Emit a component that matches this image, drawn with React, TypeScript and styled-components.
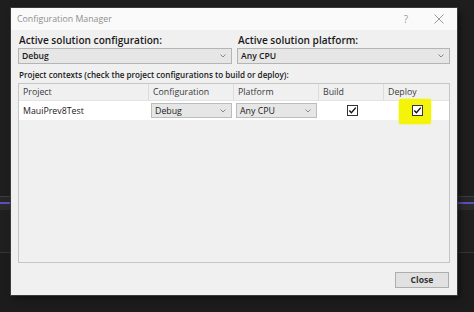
import React from 'react';
import styled, { createGlobalStyle } from 'styled-components';

const Global = createGlobalStyle`
  html, body { margin: 0; padding: 0; }
  body {
    width: 474px;
    height: 312px;
    overflow: hidden;
    background: #1f1f1f;
    font-family: "Open Sans", "Noto Sans", "Liberation Sans", sans-serif;
  }
`;

const Desktop = styled.div`
  position: relative;
  width: 474px;
  height: 312px;
  display: flex;
  flex-direction: column;
  background: #1e1e1e;
`;

const Strip = styled.div<{ $h: number; $bg: string }>`
  height: ${(p) => p.$h}px;
  background: ${(p) => p.$bg};
  flex-shrink: 0;
`;

const Dialog = styled.div`
  position: absolute;
  left: 11px;
  top: 8px;
  width: 446px;
  height: 287px;
  background: #f0f0f0;
  box-shadow: 0 0 0 1px #3a3a3a, 3px 3px 6px rgba(0, 0, 0, 0.5);
  display: flex;
  flex-direction: column;
  color: #1e1e1e;
`;

const TitleBar = styled.div`
  height: 22px;
  background: #fafafa;
  display: flex;
  align-items: center;
  padding-left: 6px;
  font-size: 8.8px;
  color: #8f8f8f;
`;

const TitleText = styled.span`
  flex: 1;
`;

const TitleButton = styled.div<{ $w: number }>`
  width: ${(p) => p.$w}px;
  height: 22px;
  display: flex;
  align-items: center;
  justify-content: center;
  color: #9a9a9a;
  font-size: 10px;
`;

const Body = styled.div`
  flex: 1;
  display: flex;
  flex-direction: column;
  padding: 4px 7px 9px 7px;
`;

const TopRow = styled.div`
  display: grid;
  grid-template-columns: 214px 1fr;
  column-gap: 5px;
`;

const Field = styled.div`
  display: flex;
  flex-direction: column;
`;

const Label = styled.div`
  font-size: 10.1px;
  height: 13px;
  line-height: 13px;
  padding-left: 1px;
  margin-bottom: 1px;
  font-weight: 600;
  color: #1a1a1a;
`;

const Combo = styled.div<{ $h: number }>`
  height: ${(p) => p.$h}px;
  box-sizing: border-box;
  border: 1px solid #b4b4b4;
  background: #e6e6e6;
  display: flex;
  align-items: center;
  padding-left: 3px;
  padding-right: 5px;
  font-size: 8.6px;
  font-weight: 600;
  color: #1a1a1a;
`;

const ComboText = styled.span`
  flex: 1;
  white-space: nowrap;
`;

const Contexts = styled(Label)`
  font-size: 8.1px;
  margin-top: 4px;
  margin-bottom: 2px;
`;

const Grid = styled.div`
  height: 180px;
  box-sizing: border-box;
  border: 1px solid #c6c6c6;
  background: #f0f0f0;
  display: flex;
  flex-direction: column;
`;

const Row = styled.div<{ $h: number; $bg: string }>`
  display: grid;
  grid-template-columns: 130px 85px 85px 65px 1fr;
  height: ${(p) => p.$h}px;
  background: ${(p) => p.$bg};
`;

const HeadCell = styled.div<{ $last?: boolean }>`
  border-right: ${(p) => (p.$last ? 'none' : '1px solid #dcdcdc')};
  border-bottom: 1px solid #e4e4e4;
  font-size: 8.8px;
  color: #3a3a3a;
  display: flex;
  align-items: center;
  padding-left: 4px;
`;

const Cell = styled.div<{ $center?: boolean }>`
  position: relative;
  display: flex;
  align-items: center;
  justify-content: ${(p) => (p.$center ? 'center' : 'flex-start')};
  padding: 0 1px 0 2px;
  font-size: 8.8px;
  color: #222;
`;

const ProjectName = styled.span`
  padding-left: 2px;
`;

const CellCombo = styled(Combo)`
  flex: 1;
  margin-right: 1px;
  border-color: #bcbcbc;
  font-weight: 400;
  font-size: 8.8px;
`;

const Highlight = styled.div`
  position: absolute;
  left: 15px;
  top: -2px;
  width: 32px;
  height: 25px;
  background: #f4f40a;
  border-radius: 2px;
  box-shadow: 0 0 2px #f4f40a;
`;

const Box = styled.div`
  position: relative;
  width: 11px;
  height: 11px;
  box-sizing: border-box;
  border: 1px solid #333;
  background: #fff;
  display: flex;
  align-items: center;
  justify-content: center;
`;

const Footer = styled.div`
  display: flex;
  justify-content: flex-end;
  margin-top: 9px;
  padding-right: 1px;
`;

const Button = styled.div`
  width: 54px;
  height: 16px;
  box-sizing: border-box;
  border: 1px solid #adadad;
  background: #e1e1e1;
  font-size: 8.6px;
  font-weight: 700;
  color: #333;
  display: flex;
  align-items: center;
  justify-content: center;
`;

const Chevron = () => (
  <svg width="6" height="4" viewBox="0 0 6 4">
    <path d="M0.5 0.5 L3 3 L5.5 0.5" fill="none" stroke="#8a8a8a" strokeWidth="1" />
  </svg>
);

const Check = () => (
  <svg width="9" height="9" viewBox="0 0 9 9">
    <path d="M1.3 4.6 L3.4 6.8 L7.8 1.6" fill="none" stroke="#111" strokeWidth="1.4" />
  </svg>
);

const CloseX = () => (
  <svg width="10" height="10" viewBox="0 0 10 10">
    <path d="M0.5 0.5 L9.5 9.5 M9.5 0.5 L0.5 9.5" stroke="#9a9a9a" strokeWidth="1" />
  </svg>
);

const columns = ['Project', 'Configuration', 'Platform', 'Build', 'Deploy'];

export default function App() {
  return (
    <>
      <Global />
      <Desktop>
        <Strip $h={196} $bg="#1e1e1e" />
        <Strip $h={1} $bg="#3c3c3c" />
        <Strip $h={5} $bg="#262626" />
        <Strip $h={2} $bg="#5b4fb8" />
        <Strip $h={6} $bg="#2b2b2b" />
        <Strip $h={42} $bg="#1f1f1f" />
        <Strip $h={1} $bg="#363636" />
        <Strip $h={59} $bg="#1c1c1c" />
        <Dialog>
          <TitleBar>
            <TitleText>Configuration Manager</TitleText>
            <TitleButton $w={30}>?</TitleButton>
            <TitleButton $w={36}>
              <CloseX />
            </TitleButton>
          </TitleBar>
          <Body>
            <TopRow>
              <Field>
                <Label>Active solution configuration:</Label>
                <Combo $h={16}>
                  <ComboText>Debug</ComboText>
                  <Chevron />
                </Combo>
              </Field>
              <Field>
                <Label>Active solution platform:</Label>
                <Combo $h={16}>
                  <ComboText>Any CPU</ComboText>
                  <Chevron />
                </Combo>
              </Field>
            </TopRow>
            <Contexts>Project contexts (check the project configurations to build or deploy):</Contexts>
            <Grid>
              <Row $h={17} $bg="#f0f0f0">
                {columns.map((c, i) => (
                  <HeadCell key={c} $last={i === columns.length - 1}>
                    {c}
                  </HeadCell>
                ))}
              </Row>
              <Row $h={19} $bg="#ffffff">
                <Cell>
                  <ProjectName>MauiPrev8Test</ProjectName>
                </Cell>
                <Cell>
                  <CellCombo $h={15}>
                    <ComboText>Debug</ComboText>
                    <Chevron />
                  </CellCombo>
                </Cell>
                <Cell>
                  <CellCombo $h={15}>
                    <ComboText>Any CPU</ComboText>
                    <Chevron />
                  </CellCombo>
                </Cell>
                <Cell $center>
                  <Box>
                    <Check />
                  </Box>
                </Cell>
                <Cell $center>
                  <Highlight />
                  <Box>
                    <Check />
                  </Box>
                </Cell>
              </Row>
            </Grid>
            <Footer>
              <Button>Close</Button>
            </Footer>
          </Body>
        </Dialog>
      </Desktop>
    </>
  );
}
